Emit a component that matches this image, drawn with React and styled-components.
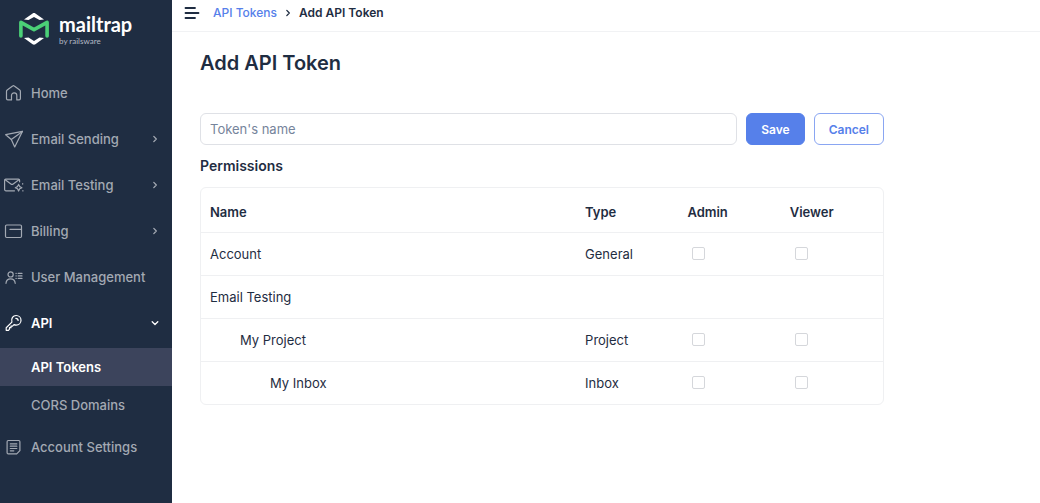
import React, { useState } from "react";

import styled, { createGlobalStyle } from "styled-components";

const GlobalStyle = createGlobalStyle`
  * {
    box-sizing: border-box;
  }
  body {
    margin: 0;
    background-color: #ffffff;
    color: #1f2d42;
    font-family: Inter, "Liberation Sans", sans-serif;
    font-size: 13px;
    line-height: 20px;
  }
`;

/////////////////////////////// icons
const Icon = (props) => (
  <svg
    width={props.size || 20}
    height={props.size || 20}
    viewBox={props.box || "0 0 20 20"}
    fill="none"
    stroke="currentColor"
    strokeWidth={props.weight || 1.2}
    strokeLinecap="round"
    strokeLinejoin="round"
    aria-hidden="true"
  >
    {props.children}
  </svg>
);

const HomeIcon = () => (
  <Icon>
    <path d="M2.500 8.400c0-.6.300-1.100.7-1.400l5.400-4c.5-.4 1.200-.4 1.700 0l5.400 4c.4.300.7.800.7 1.400v7.200c0 .8-.5 1.300-1.300 1.300h-2.300v-4.400c0-1.600-1.100-2.700-2.650-2.700s-2.650 1.100-2.650 2.700v4.400H3.800c-.8 0-1.300-.5-1.300-1.300z" />
  </Icon>
);

const SendIcon = () => (
  <Icon>
    <path d="M18.400 2.400L1.700 5.700l5.600 4.800 3.400 7.400z" />
    <path d="M18.400 2.400L7.300 10.500" />
  </Icon>
);

const TestingIcon = () => (
  <Icon>
    <path d="M10.500 15.800H1.800c-.7 0-1.200-.5-1.200-1.200V5.400c0-.7.5-1.200 1.200-1.200h12.600c.7 0 1.200.5 1.200 1.200v1.400" />
    <path d="M1.200 4.700l5.700 4.300c.7.6 1.600.6 2.300 0l5.700-4.300" />
    <path d="M14.600 9.400l1.100 2.200 2.200 1.100-2.200 1.100-1.100 2.200-1.100-2.200-2.200-1.100 2.200-1.100z" />
    <path d="M18.700 8.600v.5M18.900 15.600v.3" />
  </Icon>
);

const BillingIcon = () => (
  <Icon>
    <rect x="1.500" y="4" width="16" height="12.500" rx="1.200" />
    <path d="M6 8.400h11.500" />
  </Icon>
);

const UsersIcon = () => (
  <Icon>
    <circle cx="6.600" cy="7.400" r="2.600" />
    <path d="M2 16.300c.2-2.900 2.100-4.500 4.600-4.500s4.400 1.600 4.600 4.500" />
    <path d="M12 6.400h.2M12 8.900h.2M12 11.400h.2M14.200 6.400h3.800M14.200 8.900h3.800M14.200 11.400h3.800" />
  </Icon>
);

const KeyIcon = () => (
  <Icon>
    <path d="M12.100 2.500c2.800 0 4.900 2 4.900 4.700s-2.100 4.900-4.900 4.900c-.8 0-1.500-.2-2.100-.5l-1.500 1.500H7v1.600H5.500v1.500l-1 1.100H2.200v-2.600l5.700-5.600c-1-3.600 1.100-6.600 4.200-6.600z" />
    <path d="M11.800 5.300c1.300 0 2.300.9 2.300 2.200" />
  </Icon>
);

const SettingsIcon = () => (
  <Icon>
    <path d="M4.300 3.500h10.400c.7 0 1.200.5 1.200 1.200v9l-3.200 3.200H4.300c-.7 0-1.200-.5-1.200-1.200v-11c0-.7.500-1.200 1.200-1.200z" />
    <path d="M6.300 6.900h6.500M6.300 9.200h6.500M6.300 11.500h6.500M6.300 13.800h3.500" />
  </Icon>
);

const Chevron = (props) => (
  <Icon size={8} box="0 0 8 8" weight={1.3}>
    <path d={props.down ? "M1.200 2.800L4 5.500l2.800-2.700" : "M2.800 1.400L5.300 4 2.800 6.600"} />
  </Icon>
);

const LogoMark = () => (
  <svg width="32" height="34" viewBox="0 0 32 34" aria-hidden="true">
    <path d="M6 7.500l8.600-6c.9-.6 1.900-.6 2.800 0l8.600 6-4.500.6L16 4.900l-5.500 3.200z" fill="#fff" />
    <path d="M6 26.100l4.500-.6L16 28.900l5.500-3.400 4.500.6-8.600 6.200c-.9.600-1.900.6-2.800 0z" fill="#fff" />
    <path
      d="M2.900 23.900V10.400L16 17.600l13.100-7.200v13.500"
      fill="none"
      stroke="#4bd077"
      strokeWidth="3.600"
      strokeLinejoin="round"
      strokeLinecap="round"
    />
  </svg>
);

/////////////////////////////// sidebar data
const menu = [
  { label: "Home", icon: <HomeIcon /> },
  { label: "Email Sending", icon: <SendIcon />, more: true },
  { label: "Email Testing", icon: <TestingIcon />, more: true },
  { label: "Billing", icon: <BillingIcon />, more: true },
  { label: "User Management", icon: <UsersIcon /> },
  {
    label: "API",
    icon: <KeyIcon />,
    more: true,
    open: true,
    children: [{ label: "API Tokens", active: true }, { label: "CORS Domains" }],
  },
  { label: "Account Settings", icon: <SettingsIcon /> },
];

const permissions = [
  { name: "Account", type: "General", level: 0 },
  { name: "Email Testing", level: 0 },
  { name: "My Project", type: "Project", level: 1 },
  { name: "My Inbox", type: "Inbox", level: 2 },
];

const Sidebar = () => (
  <SideNav>
    <Logo href="#">
      <LogoMark />
      <span>
        <Brand>mailtrap</Brand>
        <Byline>by railsware</Byline>
      </span>
    </Logo>
    <MenuList>
      {menu.map((item) => (
        <li key={item.label}>
          <MenuLink href="#" $active={item.open}>
            {item.icon}
            <MenuLabel>{item.label}</MenuLabel>
            {item.more && <Chevron down={item.open} />}
          </MenuLink>
          {item.children && (
            <SubList>
              {item.children.map((sub) => (
                <li key={sub.label}>
                  <SubLink href="#" $active={sub.active}>
                    {sub.label}
                  </SubLink>
                </li>
              ))}
            </SubList>
          )}
        </li>
      ))}
    </MenuList>
  </SideNav>
);

/////////////////////////////// permissions table
const PermissionTable = () => (
  <TableCard>
    <Table aria-labelledby="permissions">
      <thead>
        <tr>
          <Th $width="55%">Name</Th>
          <Th $width="15%">Type</Th>
          <Th $width="15%">Admin</Th>
          <Th $width="15%">Viewer</Th>
        </tr>
      </thead>
      <tbody>
        {permissions.map((row) => (
          <tr key={row.name}>
            <Td $level={row.level}>{row.name}</Td>
            <Td>{row.type}</Td>
            <Td>{row.type && <Checkbox aria-label={`${row.name} admin`} />}</Td>
            <Td>{row.type && <Checkbox aria-label={`${row.name} viewer`} />}</Td>
          </tr>
        ))}
      </tbody>
    </Table>
  </TableCard>
);

const App = () => {
  const [name, setName] = useState("");

  return (
    <Page>
      <GlobalStyle />
      <Sidebar />
      <Content>
        <TopBar>
          <MenuButton type="button" aria-label="Toggle menu">
            <Icon size={16} box="0 0 16 16" weight={1.8}>
              <path d="M1.500 3h9.500M1.500 8h13M1.500 13h9.500" />
            </Icon>
          </MenuButton>
          <Breadcrumbs aria-label="Breadcrumb">
            <CrumbLink href="#">API Tokens</CrumbLink>
            <Chevron />
            <CrumbCurrent aria-current="page">Add API Token</CrumbCurrent>
          </Breadcrumbs>
        </TopBar>
        <Main>
          <Title>Add API Token</Title>
          <TokenForm onSubmit={(e) => e.preventDefault()}>
            <NameInput
              type="text"
              aria-label="Token's name"
              placeholder="Token's name"
              value={name}
              onChange={(e) => setName(e.target.value)}
            />
            <Button type="submit" $primary>
              Save
            </Button>
            <Button type="button">Cancel</Button>
          </TokenForm>
          <SubTitle id="permissions">Permissions</SubTitle>
          <PermissionTable />
        </Main>
      </Content>
    </Page>
  );
};

const Page = styled.div`
  display: flex;
  min-height: 100vh;
`;

const SideNav = styled.nav`
  flex: 0 0 172px;
  background-color: #1f2d42;
`;
const Logo = styled.a`
  display: flex;
  align-items: center;
  gap: 9px;
  height: 70px;
  padding: 0 0 12px 18px;
  color: #ffffff;
  text-decoration: none;
`;
const Brand = styled.span`
  display: block;
  font-family: Lato, sans-serif;
  font-size: 20px;
  font-weight: 700;
  line-height: 24px;
`;
const Byline = styled.span`
  display: block;
  color: #b4bac5;
  font-family: Lato, sans-serif;
  font-size: 8px;
  line-height: 10px;
`;
const MenuList = styled.ul`
  margin: 0;
  padding: 0;
  list-style: none;
`;
const MenuLink = styled.a`
  display: flex;
  align-items: center;
  height: 46px;
  padding: 0 13px 0 4px;
  color: ${(props) => (props.$active ? "#ffffff" : "#a3a9b3")};
  font-weight: ${(props) => (props.$active ? 600 : 500)};
  text-decoration: none;
`;
const MenuLabel = styled.span`
  flex: 1;
  margin-left: 7px;
  white-space: nowrap;
`;
const SubList = styled.ul`
  margin: 2px 0 0;
  padding: 0;
  list-style: none;
`;
const SubLink = styled.a`
  display: flex;
  align-items: center;
  height: 38px;
  padding-left: 31px;
  background-color: ${(props) => (props.$active ? "#3c445c" : "transparent")};
  color: ${(props) => (props.$active ? "#ffffff" : "#a3a9b3")};
  font-weight: ${(props) => (props.$active ? 600 : 500)};
  text-decoration: none;
`;

const Content = styled.div`
  flex: 1;
  min-width: 0;
`;
const TopBar = styled.header`
  display: flex;
  align-items: center;
  gap: 13px;
  height: 32px;
  padding: 0 12px 5px;
  border-bottom: 1px solid #f1f2f4;
`;
const MenuButton = styled.button`
  display: flex;
  padding: 0;
  border: 0;
  background: none;
  color: #1f2d42;
  cursor: pointer;
`;
const Breadcrumbs = styled.nav`
  display: flex;
  align-items: center;
  gap: 7px;
  font-size: 12px;
`;
const CrumbLink = styled.a`
  color: #5680ea;
  font-weight: 500;
  text-decoration: none;
`;
const CrumbCurrent = styled.span`
  font-weight: 600;
`;

const Main = styled.main`
  max-width: 740px;
  padding: 16px 28px;
`;
const Title = styled.h1`
  margin: 0 0 35px;
  font-size: 20px;
  font-weight: 600;
  line-height: 30px;
`;
const TokenForm = styled.form`
  display: flex;
  gap: 9px;
`;
const NameInput = styled.input`
  flex: 1;
  min-width: 0;
  height: 32px;
  padding: 0 9px;
  border: 1px solid #dfe1e6;
  border-radius: 6px;
  color: #1f2d42;
  font-family: inherit;
  font-size: 13px;

  &::placeholder {
    color: #76849b;
  }
`;
const Button = styled.button`
  height: 32px;
  padding: 0 14px;
  border: 1px solid ${(props) => (props.$primary ? "#5680ea" : "#8aa6f2")};
  border-radius: 6px;
  background-color: ${(props) => (props.$primary ? "#5680ea" : "#ffffff")};
  color: ${(props) => (props.$primary ? "#ffffff" : "#5680ea")};
  font-family: inherit;
  font-size: 12px;
  font-weight: 600;
  cursor: pointer;
`;
const SubTitle = styled.h2`
  margin: 11px 0;
  font-size: 14px;
  font-weight: 600;
  line-height: 20px;
`;

const TableCard = styled.div`
  border: 1px solid #eff0f2;
  border-radius: 6px;
`;
const Table = styled.table`
  width: 100%;
  border-spacing: 0;
  table-layout: fixed;
`;
const Th = styled.th`
  width: ${(props) => props.$width};
  height: 44px;
  padding: 4px 9px 0;
  font-weight: 600;
  text-align: left;
`;
const Td = styled.td`
  height: 43px;
  padding: 0 9px 1px;
  padding-left: ${(props) => 9 + (props.$level || 0) * 30}px;
  border-top: 1px solid #eff0f2;
`;
const Checkbox = styled.input.attrs({ type: "checkbox" })`
  display: block;
  width: 13px;
  height: 13px;
  margin: 0 5px;
  border: 1px solid #d5d7db;
  border-radius: 2px;
  background-color: #ffffff;
  appearance: none;

  &:checked {
    background-color: #5680ea;
  }
`;

export default App;
